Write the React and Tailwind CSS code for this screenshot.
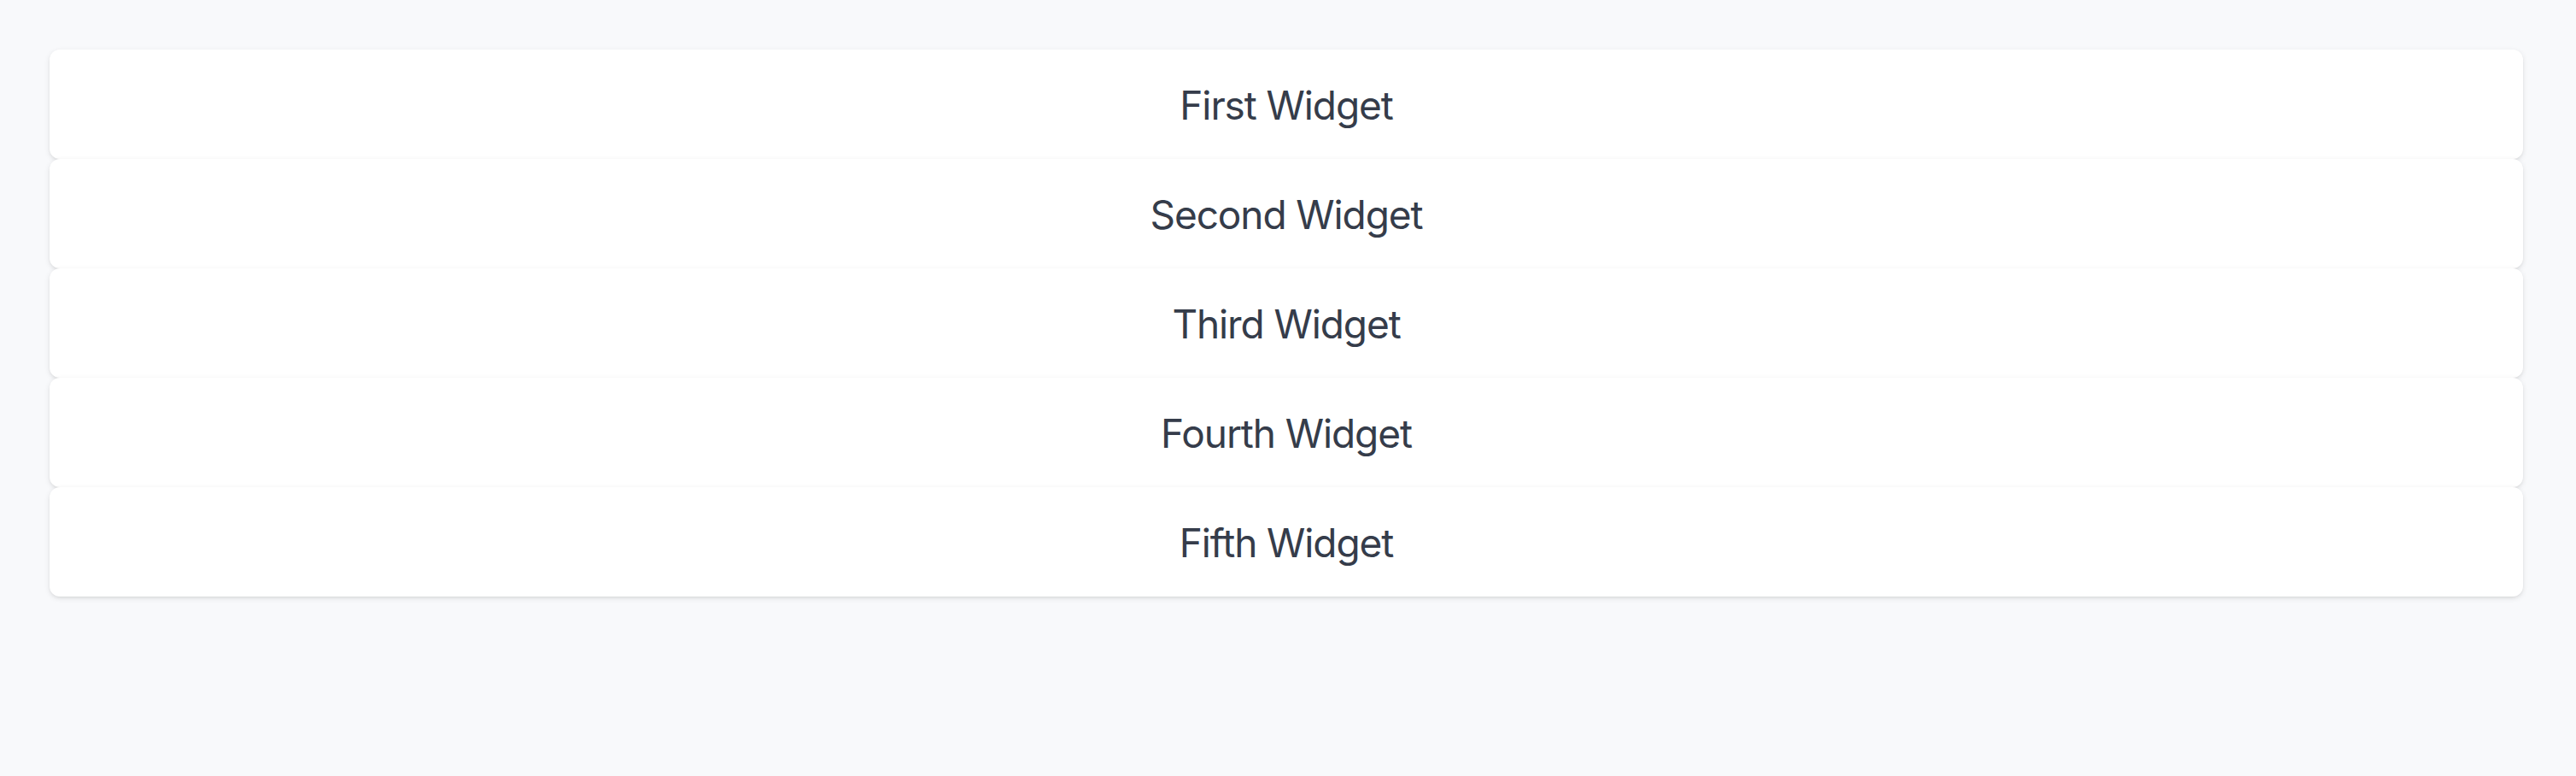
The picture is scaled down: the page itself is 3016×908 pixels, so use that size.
export default function App() {
  const items = ["First Widget", "Second Widget", "Third Widget", "Fourth Widget", "Fifth Widget"];
  return (
    <div className="min-h-[908px] bg-[#f8f9fb] pt-[58px] pl-[58px] pr-[62px]" style={{ fontFamily: 'Inter, "Noto Sans", sans-serif' }}>
      <div className="flex flex-col">
        {items.map((t) => (
          <div
            key={t}
            className="h-[128px] pt-[2px] flex items-center justify-center bg-white rounded-[12px] shadow-[0_2px_6px_0_rgba(0,0,0,0.1),0_2px_4px_-2px_rgba(0,0,0,0.1)] text-[46px] tracking-[-1.1px] text-[#353c4a]"
          >
            {t}
          </div>
        ))}
      </div>
    </div>
  );
}
